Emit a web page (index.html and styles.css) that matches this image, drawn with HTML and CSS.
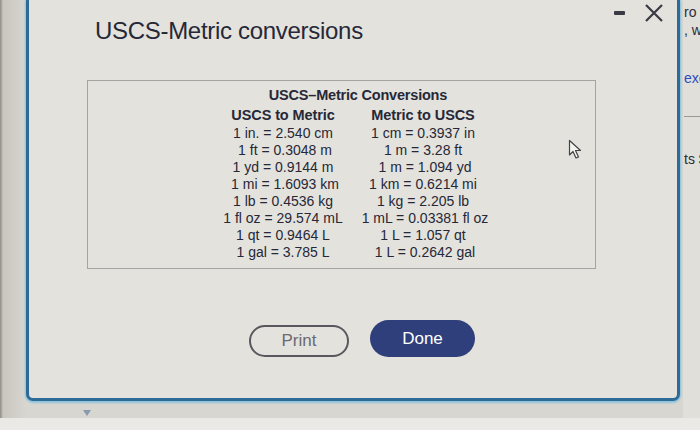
FILE: index.html
```html
<!DOCTYPE html>
<html>
<head>
<meta charset="utf-8">
<link rel="stylesheet" href="styles.css">
</head>
<body>
<div class="screen">
  <div class="left-gutter"></div>
  <div class="dialog">
    <div class="header">
      <h1 class="title">USCS-Metric conversions</h1>
      <div class="controls">
        <span class="minimize"></span>
        <svg class="close" width="20" height="18" viewBox="0 0 20 18"><path d="M2 1 L18 17 M18 1 L2 17" stroke="#3a3a44" stroke-width="2.2" fill="none"/></svg>
      </div>
    </div>
    <div class="table-box">
      <div class="conv">
        <div class="conv-title">USCS–Metric Conversions</div>
        <div class="col">
          <div class="col-head">USCS to Metric</div>
          <div>1 in. = 2.540 cm</div>
          <div class="nudge">1 ft = 0.3048 m</div>
          <div>1 yd = 0.9144 m</div>
          <div class="nudge">1 mi = 1.6093 km</div>
          <div>1 lb = 0.4536 kg</div>
          <div>1 fl oz = 29.574 mL</div>
          <div>1 qt = 0.9464 L</div>
          <div>1 gal = 3.785 L</div>
        </div>
        <div class="col">
          <div class="col-head">Metric to USCS</div>
          <div>1 cm = 0.3937 in</div>
          <div>1 m = 3.28 ft</div>
          <div class="nudge">1 m = 1.094 yd</div>
          <div>1 km = 0.6214 mi</div>
          <div>1 kg = 2.205 lb</div>
          <div class="nudge">1 mL = 0.03381 fl oz</div>
          <div>1 L = 1.057 qt</div>
          <div class="nudge">1 L = 0.2642 gal</div>
        </div>
      </div>
      <svg class="cursor" width="16" height="22" viewBox="0 0 16 22"><path d="M1.5 1.5 L1.5 16 L5 12.5 L8 19 L10.5 18 L7.5 11.5 L12.5 11.5 Z" fill="#f4f4f2" stroke="#444" stroke-width="1.2" stroke-linejoin="round"/></svg>
    </div>
    <div class="buttons">
      <button class="btn btn-print">Print</button>
      <button class="btn btn-done">Done</button>
    </div>
  </div>
  <div class="side">
    <div class="side-line">ro</div>
    <div class="side-line">, w</div>
    <div class="side-line side-link">exc</div>
    <div class="side-rule"></div>
    <div class="side-line side-last">ts $</div>
  </div>
  <span class="marker"></span>
</div>
</body>
</html>
```

FILE: styles.css
```css
html, body {
  margin: 0;
  padding: 0;
}
body {
  width: 700px;
  height: 430px;
  overflow: hidden;
  background: #ebe9e5;
  font-family: "Liberation Sans", Arial, sans-serif;
}
.screen {
  position: relative;
  display: flex;
  width: 700px;
  height: 418px;
  background: linear-gradient(to right, #8c8a86 0, #c9c6c0 3px, #d8d6d0 26px);
}
.left-gutter {
  width: 26px;
  flex: none;
}
.dialog {
  width: 648px;
  height: 398px;
  flex: none;
  display: flex;
  flex-direction: column;
  background: #e4e2dc;
  border: 3px solid #2d6a98;
  border-top: none;
  border-radius: 0 0 7px 7px;
  box-shadow: 0 2px 2px #8fc4dc, -1px 0 2px #8fc4dc, 1px 0 2px #8fc4dc;
}
.header {
  display: flex;
  justify-content: space-between;
  align-items: flex-start;
  height: 80px;
}
.title {
  margin: 17px 0 0 66px;
  font-size: 24px;
  line-height: 28px;
  font-weight: normal;
  color: #262838;
  letter-spacing: -0.3px;
}
.controls {
  display: flex;
  align-items: center;
  gap: 19px;
  margin: 4px 13px 0 0;
}
.minimize {
  display: block;
  width: 11px;
  height: 4px;
  background: #3a3a44;
  border-radius: 1px;
}
.table-box {
  position: relative;
  margin: 0 0 0 58px;
  width: 509px;
  height: 189px;
  border: 1px solid #a5a4a2;
  box-sizing: border-box;
  padding: 5px 0 0 126px;
}
.conv {
  display: grid;
  grid-template-columns: 138px 138px;
  column-gap: 2px;
  width: 278px;
  color: #262838;
  font-size: 14px;
  line-height: 17px;
  text-align: center;
  white-space: nowrap;
}
.nudge {
  padding-left: 4px;
}
.conv-title {
  grid-column: 1 / 3;
  font-weight: bold;
  font-size: 14.5px;
  line-height: 19px;
  padding-left: 10px;
  letter-spacing: -0.2px;
}
.col-head {
  font-weight: bold;
  font-size: 14.5px;
  line-height: 20px;
  letter-spacing: -0.1px;
}
.cursor {
  position: absolute;
  left: 480px;
  top: 58px;
}
.buttons {
  display: flex;
  gap: 21px;
  align-items: center;
  margin: 51px 0 0 220px;
}
.btn {
  font-family: "Liberation Sans", Arial, sans-serif;
  border-radius: 20px;
  padding: 0;
  cursor: default;
}
.btn-print {
  width: 100px;
  height: 32px;
  margin-top: 5px;
  background: transparent;
  border: 2px solid #58585e;
  color: #6a6a72;
  font-size: 17px;
}
.btn-done {
  width: 105px;
  height: 37px;
  background: #2f3f7c;
  border: none;
  color: #ffffff;
  font-size: 17px;
}
.side {
  flex: 1;
  overflow: hidden;
  white-space: nowrap;
  background: #e1dfd9;
  margin-left: 3px;
  padding-left: 1px;
  font-size: 14px;
  color: #2a2c3c;
}
.side-line {
  height: 18px;
  line-height: 18px;
}
.side-line:first-child {
  margin-top: 3px;
}
.side-link {
  margin-top: 30px;
  color: #2d4cc0;
}
.side-rule {
  margin-top: 29px;
  height: 1px;
  background: #9a9994;
}
.side-last {
  margin-top: 33px;
}
.marker {
  position: absolute;
  left: 83px;
  top: 410px;
  width: 0;
  height: 0;
  border-left: 4px solid transparent;
  border-right: 4px solid transparent;
  border-top: 6px solid #8899b0;
}
```
